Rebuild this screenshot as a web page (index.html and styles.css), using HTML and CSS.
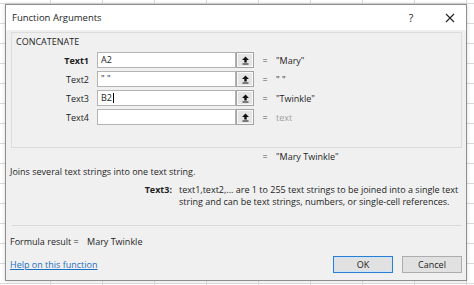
FILE: index.html
```html
<!DOCTYPE html>
<html lang="en">
<head>
    <meta charset="UTF-8">
    <meta name="viewport" content="width=device-width, initial-scale=1.0">
    <title>Function Arguments</title>
    <link rel="stylesheet" href="styles.css">
</head>
<body>
    <div class="sheet">
        <div class="dialog">
            <div class="titlebar">
                <span class="title">Function Arguments</span>
                <span class="help">?</span>
                <svg class="close" width="10" height="10" viewBox="0 0 10 10">
                    <path d="M1 1 L9 9 M9 1 L1 9" stroke="#222" stroke-width="1.1" fill="none"/>
                </svg>
            </div>
            <div class="body">
                <div class="group">
                    <div class="fname">CONCATENATE</div>
                    <div class="args">
                        <label class="arg-label bold">Text1</label>
                        <div class="field">A2</div>
                        <button class="ref"><svg width="9" height="9" viewBox="0 0 9 9"><path d="M4.5 0.5 L1 4 H3.3 V6.4 H5.7 V4 H8 Z M1.5 7.5 H7.5 V8.6 H1.5 Z" fill="#111"/></svg></button>
                        <span class="eq">=</span>
                        <span class="val">"Mary"</span>

                        <label class="arg-label">Text2</label>
                        <div class="field">" "</div>
                        <button class="ref"><svg width="9" height="9" viewBox="0 0 9 9"><path d="M4.5 0.5 L1 4 H3.3 V6.4 H5.7 V4 H8 Z M1.5 7.5 H7.5 V8.6 H1.5 Z" fill="#111"/></svg></button>
                        <span class="eq">=</span>
                        <span class="val">" "</span>

                        <label class="arg-label">Text3</label>
                        <div class="field">B2<span class="caret"></span></div>
                        <button class="ref"><svg width="9" height="9" viewBox="0 0 9 9"><path d="M4.5 0.5 L1 4 H3.3 V6.4 H5.7 V4 H8 Z M1.5 7.5 H7.5 V8.6 H1.5 Z" fill="#111"/></svg></button>
                        <span class="eq">=</span>
                        <span class="val">"Twinkle"</span>

                        <label class="arg-label">Text4</label>
                        <div class="field"></div>
                        <button class="ref"><svg width="9" height="9" viewBox="0 0 9 9"><path d="M4.5 0.5 L1 4 H3.3 V6.4 H5.7 V4 H8 Z M1.5 7.5 H7.5 V8.6 H1.5 Z" fill="#111"/></svg></button>
                        <span class="eq">=</span>
                        <span class="val muted">text</span>
                    </div>
                </div>

                <div class="result-line">
                    <span class="eq">=</span>
                    <span class="val">"Mary Twinkle"</span>
                </div>

                <p class="summary">Joins several text strings into one text string.</p>

                <div class="argdesc">
                    <b>Text3:</b>
                    <span>text1,text2,... are 1 to 255 text strings to be joined into a single text<br>string and can be text strings, numbers, or single-cell references.</span>
                </div>

                <div class="footer">
                    <div class="formula">Formula result = <span class="formula-val">Mary Twinkle</span></div>
                    <div class="actions">
                        <a href="#" class="help-link">Help on this function</a>
                        <div class="buttons">
                            <button class="btn primary">OK</button>
                            <button class="btn">Cancel</button>
                        </div>
                    </div>
                </div>
            </div>
        </div>
    </div>
</body>
</html>
```

FILE: styles.css
```css
body {
    margin: 0;
    font-family: "Open Sans", "Noto Sans", sans-serif;
    font-size: 9px;
    color: #1e1e1e;
}

/* spreadsheet grid behind the dialog */
.sheet {
    width: 474px;
    height: 285px;
    overflow: hidden;
    background-color: #fff;
    background-image:
        linear-gradient(to right, #dadada 1px, transparent 1px),
        linear-gradient(to bottom, #dadada 1px, transparent 1px);
    background-size: 52px 20px;
    background-position: 50px 3px;
    padding: 4px 0 0 5px;
    box-sizing: border-box;
}

.dialog {
    width: 462px;
    height: 277px;
    box-sizing: border-box;
    border: 1px solid #8f8f8f;
    background: #f0f0f0;
    box-shadow: 0 0 4px rgba(0, 0, 0, 0.15);
    display: flex;
    flex-direction: column;
}

.titlebar {
    height: 25px;
    background: #fff;
    display: flex;
    align-items: center;
    padding-left: 6px;
    flex-shrink: 0;
}

.title {
    font-size: 9.5px;
    flex: 1;
}

.help {
    font-size: 10.5px;
    width: 10px;
    text-align: center;
    margin-right: 29px;
}

.close {
    margin-right: 11px;
}

.body {
    padding: 2px 4px 7px 4px;
    flex: 1;
    display: flex;
    flex-direction: column;
}

.group {
    margin-left: 1px;
    height: 116px;
    box-sizing: border-box;
    border: 1px solid #dcdcdc;
    padding: 3px 0 0 0;
}

.fname {
    padding-left: 4px;
    line-height: 12px;
    height: 12px;
}

.args {
    margin-top: 4px;
    display: grid;
    grid-template-columns: 85px 139px 18px 22px 1fr;
    grid-auto-rows: 16px;
    row-gap: 3px;
    align-items: center;
}

.arg-label {
    text-align: right;
    padding-right: 8px;
}

.bold {
    font-weight: bold;
}

.field {
    height: 16px;
    box-sizing: border-box;
    border: 1px solid #b4b4b4;
    background: #fff;
    padding-left: 3px;
    line-height: 14px;
    display: flex;
    align-items: center;
}

.caret {
    display: inline-block;
    width: 1px;
    height: 10px;
    background: #000;
    margin-left: 1px;
}

.ref {
    height: 16px;
    width: 18px;
    box-sizing: border-box;
    border: 1px solid #a3a3a3;
    box-shadow: inset 0 0 0 1px #fafafa;
    background: #e5e5e5;
    padding: 0;
    display: flex;
    align-items: center;
    justify-content: center;
}

.eq {
    text-align: center;
    color: #555;
}

.muted {
    color: #a0a0a0;
}

.result-line {
    margin-top: 3px;
    display: grid;
    grid-template-columns: 22px 1fr;
    padding-left: 244px;
    line-height: 12px;
}

.summary {
    margin: 3px 0 0 0;
    line-height: 12px;
}

.argdesc {
    margin-top: 6px;
    display: grid;
    grid-template-columns: 162px 1fr;
    column-gap: 7px;
    line-height: 12px;
}

.argdesc b {
    text-align: right;
}

.footer {
    margin-top: auto;
    margin-left: 2px;
    border-top: 1px solid #dadada;
    padding-top: 10px;
}

.formula {
    margin-left: -2px;
    line-height: 12px;
}

.formula-val {
    margin-left: 6px;
}

.actions {
    margin-top: 8px;
    margin-left: -2px;
    display: flex;
    align-items: center;
    justify-content: space-between;
}

.help-link {
    color: #1f6fbf;
    text-decoration: underline;
}

.buttons {
    display: flex;
    gap: 9px;
}

.btn {
    width: 60px;
    height: 17px;
    box-sizing: border-box;
    border: 1px solid #adadad;
    background: #e1e1e1;
    font-family: inherit;
    font-size: 9px;
    color: #1e1e1e;
    padding: 0;
}

.primary {
    border: 1px solid #2a7fd4;
    box-shadow: inset 0 0 0 1px #cde3f7;
}
```
